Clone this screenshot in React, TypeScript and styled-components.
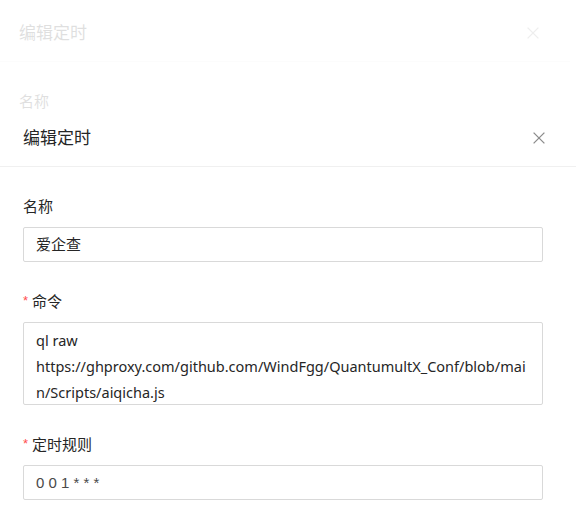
import React from "react";
import styled, { createGlobalStyle } from "styled-components";

const GlobalStyle = createGlobalStyle`
  html, body {
    margin: 0;
    padding: 0;
    background: #fff;
  }
  body {
    font-family: "Noto Sans", "Noto Sans CJK SC", sans-serif;
    color: rgba(0, 0, 0, 0.85);
  }
`;

type Props = {
  peek?: boolean;
};

const commandLines = [
  "ql raw",
  "https://ghproxy.com/github.com/WindFgg/QuantumultX_Conf/blob/mai",
  "n/Scripts/aiqicha.js",
];

// the same dialog, drawn twice: a faded copy from the opening animation
// peeks out above the real one
const EditModal: React.FC<Props> = ({ peek }) => (
  <Dialog $faded={peek}>
    <Header>
      <Title>编辑定时</Title>
      <CloseButton type="button" aria-label="close">
        <svg width="12" height="12" viewBox="0 0 12 12">
          <path
            d="M0.6 0.6 L11.4 11.4 M11.4 0.6 L0.6 11.4"
            stroke="#8c8c8c"
            strokeWidth="1.3"
            fill="none"
          />
        </svg>
      </CloseButton>
    </Header>
    <Body>
      <Field>
        <Label>名称</Label>
        {!peek && <Input>爱企查</Input>}
      </Field>
      {!peek && (
        <>
          <Field>
            <Label>
              <Required>*</Required>命令
            </Label>
            <TextArea>
              {commandLines.map((line) => (
                <Line key={line}>{line}</Line>
              ))}
            </TextArea>
          </Field>
          <Field>
            <Label>
              <Required>*</Required>定时规则
            </Label>
            <Input $mono>0 0 1 * * *</Input>
          </Field>
        </>
      )}
    </Body>
  </Dialog>
);

export default function App() {
  return (
    <>
      <GlobalStyle />
      <Page>
        <GhostFrame>
          <EditModal peek />
        </GhostFrame>
        <EditModal />
      </Page>
    </>
  );
}

const Page = styled.div`
  width: 576px;
  height: 529px;
  overflow: hidden;
  background: #fff;
`;

const GhostFrame = styled.div`
  height: 110px;
  padding-top: 5px;
  box-sizing: border-box;
  overflow: hidden;
`;

const Dialog = styled.div<{ $faded?: boolean }>`
  background: #fff;
  opacity: ${(p) => (p.$faded ? 0.14 : 1)};
  margin: ${(p) => (p.$faded ? "0 6px 0 -4px" : "0")};
`;

const Header = styled.div`
  height: 56px;
  padding: 0 31px 0 23px;
  display: flex;
  align-items: center;
  justify-content: space-between;
  border-bottom: 1px solid #f0f0f0;
`;

const Title = styled.div`
  font-size: 17px;
  line-height: 24px;
  color: #262626;
`;

const CloseButton = styled.button`
  width: 12px;
  height: 12px;
  padding: 0;
  border: none;
  background: transparent;
  display: flex;
  cursor: pointer;
`;

const Body = styled.div`
  padding: 27px 33px 0 23px;
`;

const Field = styled.div`
  margin-bottom: 27px;
`;

const Label = styled.div`
  display: flex;
  align-items: center;
  height: 24px;
  font-size: 15px;
  line-height: 24px;
  color: #262626;
  margin-bottom: 9px;
`;

const Required = styled.span`
  color: #ff4d4f;
  font-size: 13px;
  margin-right: 4px;
  font-family: "Liberation Sans", sans-serif;
`;

const Input = styled.div<{ $mono?: boolean }>`
  height: 35px;
  box-sizing: border-box;
  border: 1px solid #d9d9d9;
  border-radius: 2px;
  padding: 0 12px;
  font-size: 15px;
  line-height: 33px;
  color: ${(p) => (p.$mono ? "#4a4a4a" : "#262626")};
  font-family: ${(p) =>
    p.$mono
      ? `"Liberation Sans", sans-serif`
      : `"Noto Sans", "Noto Sans CJK SC", sans-serif`};
`;

const TextArea = styled.div`
  height: 83px;
  box-sizing: border-box;
  border: 1px solid #d9d9d9;
  border-radius: 2px;
  padding: 4px 12px 0;
  font-size: 14.5px;
  line-height: 26px;
  color: #262626;
  overflow: hidden;
`;

const Line = styled.div`
  white-space: nowrap;
`;
